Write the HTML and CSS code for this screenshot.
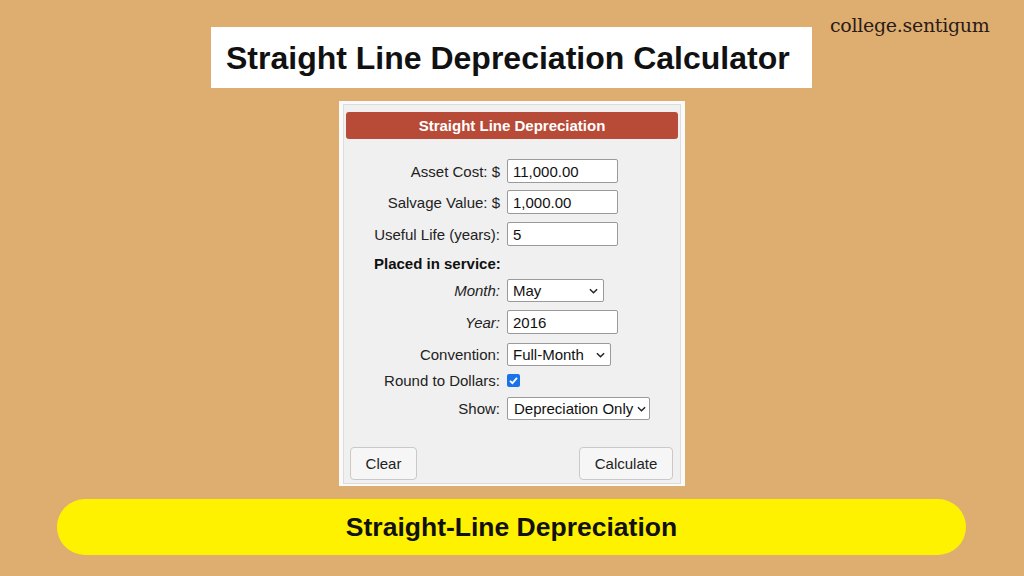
FILE: index.html
```html
<!DOCTYPE html>
<html>
<head>
<meta charset="utf-8">
<link rel="stylesheet" href="styles.css">
</head>
<body>
<div class="page">
  <div class="brand">college.sentigum</div>
  <div class="title-box"><h1>Straight Line Depreciation Calculator</h1></div>
  <div class="panel">
    <div class="panel-inner">
      <div class="panel-head">Straight Line Depreciation</div>
      <div class="row r-asset"><label class="lbl">Asset Cost: $</label><div class="field">11,000.00</div></div>
      <div class="row r-salv"><label class="lbl">Salvage Value: $</label><div class="field">1,000.00</div></div>
      <div class="row r-life"><label class="lbl">Useful Life (years):</label><div class="field">5</div></div>
      <div class="section">Placed in service:</div>
      <div class="row r-month"><label class="lbl it">Month:</label><div class="select s-month"><span>May</span><svg class="chev" viewBox="0 0 10 6"><path d="M1 1 L5 5 L9 1" fill="none" stroke="#222" stroke-width="1.6"/></svg></div></div>
      <div class="row r-year"><label class="lbl it">Year:</label><div class="field">2016</div></div>
      <div class="row r-conv"><label class="lbl">Convention:</label><div class="select s-conv"><span>Full-Month</span><svg class="chev" viewBox="0 0 10 6"><path d="M1 1 L5 5 L9 1" fill="none" stroke="#222" stroke-width="1.6"/></svg></div></div>
      <div class="row r-round"><label class="lbl">Round to Dollars:</label><div class="check"><svg viewBox="0 0 13 13"><rect x="0" y="0" width="13" height="13" rx="2" fill="#1a73e8"/><path d="M3 6.8 L5.4 9.2 L10 3.8" fill="none" stroke="#fff" stroke-width="1.8"/></svg></div></div>
      <div class="row r-show"><label class="lbl">Show:</label><div class="select s-show"><span>Depreciation Only</span><svg class="chev" viewBox="0 0 10 6"><path d="M1 1 L5 5 L9 1" fill="none" stroke="#222" stroke-width="1.6"/></svg></div></div>
      <div class="buttons">
        <div class="btn b-clear">Clear</div>
        <div class="btn b-calc">Calculate</div>
      </div>
    </div>
  </div>
  <div class="pill"><span class="pill-text">Straight-Line Depreciation</span></div>
</div>
</body>
</html>
```

FILE: styles.css
```css
html, body {
  margin: 0;
  padding: 0;
}
body {
  background: #deae70;
  width: 1024px;
  height: 576px;
  overflow: hidden;
  font-family: "Liberation Sans", Arimo, Arial, sans-serif;
}
.page {
  position: relative;
  width: 1024px;
  height: 576px;
  display: flex;
  flex-direction: column;
  align-items: center;
}
.brand {
  position: absolute;
  left: 830px;
  top: 14px;
  font-family: "DejaVu Serif", serif;
  font-size: 19px;
  color: #2b1b17;
  letter-spacing: -0.3px;
}
.title-box {
  margin-top: 27px;
  margin-left: -1px;
  width: 601px;
  height: 61px;
  background: #fff;
  box-sizing: border-box;
  padding-left: 15px;
  display: flex;
  align-items: center;
}
.title-box h1 {
  margin: 0;
  font-size: 32px;
  font-weight: bold;
  color: #111;
  padding-top: 2px;
}
.panel {
  margin-top: 13px;
  width: 346px;
  height: 385px;
  box-sizing: border-box;
  background: #fafafa;
  padding: 3px 4px 2px 4px;
}
.panel-inner {
  height: 100%;
  box-sizing: border-box;
  background: #f0f0f0;
  border: 1px solid #dcdcdc;
  padding: 7px 2px 0 2px;
  display: flex;
  flex-direction: column;
}
.panel-head {
  height: 27px;
  background: #b84a38;
  border-radius: 3px;
  color: #fff;
  font-weight: bold;
  font-size: 15px;
  display: flex;
  align-items: center;
  justify-content: center;
}
.row {
  display: flex;
  align-items: center;
  height: 24px;
}
.lbl {
  width: 163px;
  text-align: right;
  font-size: 15px;
  color: #222;
  padding-right: 7px;
  box-sizing: border-box;
  margin-left: -2px;
}
.it { font-style: italic; }
.field, .select {
  height: 24px;
  box-sizing: border-box;
  background: #fff;
  border: 1px solid #9a9a9a;
  border-radius: 2px;
  font-size: 15px;
  color: #111;
  display: flex;
  align-items: center;
  padding-left: 5px;
}
.field { width: 111px; }
.select {
  height: 23px;
  justify-content: space-between;
  padding-right: 5px;
}
.s-month { width: 97px; }
.s-conv { width: 104px; }
.s-show { width: 143px; padding-left: 6px; padding-right: 3px; }
.chev { width: 9px; height: 6px; flex: none; }
.r-asset { margin-top: 20px; }
.r-salv { margin-top: 7px; }
.r-life { margin-top: 8px; }
.section {
  margin-top: 10px;
  padding-left: 28px;
  font-weight: bold;
  font-size: 15px;
  color: #111;
  height: 16px;
  line-height: 16px;
}
.r-month { margin-top: 7px; height: 23px; }
.r-year { margin-top: 8px; }
.r-conv { margin-top: 9px; height: 23px; }
.r-round { margin-top: 6px; height: 17px; }
.check { width: 13px; height: 13px; margin-left: 0; }
.check svg { width: 13px; height: 13px; display: block; }
.r-show { margin-top: 8px; height: 23px; }
.buttons {
  display: flex;
  justify-content: space-between;
  margin-top: 27px;
  padding: 0 5px 0 4px;
}
.btn {
  height: 33px;
  box-sizing: border-box;
  background: #f6f6f6;
  border: 1px solid #c9c9c9;
  border-radius: 4px;
  font-size: 15px;
  color: #222;
  display: flex;
  align-items: center;
  justify-content: center;
}
.b-clear { width: 67px; }
.b-calc { width: 94px; }
.pill {
  margin-top: 13px;
  width: 909px;
  height: 56px;
  margin-left: -1px;
  border-radius: 28px;
  background: #fff200;
  display: flex;
  align-items: center;
  justify-content: center;
  color: #111;
}
.pill-text {
  font-family: "Liberation Sans", Arimo, Arial, sans-serif;
  font-weight: bold;
  font-size: 26.5px;
}
```
